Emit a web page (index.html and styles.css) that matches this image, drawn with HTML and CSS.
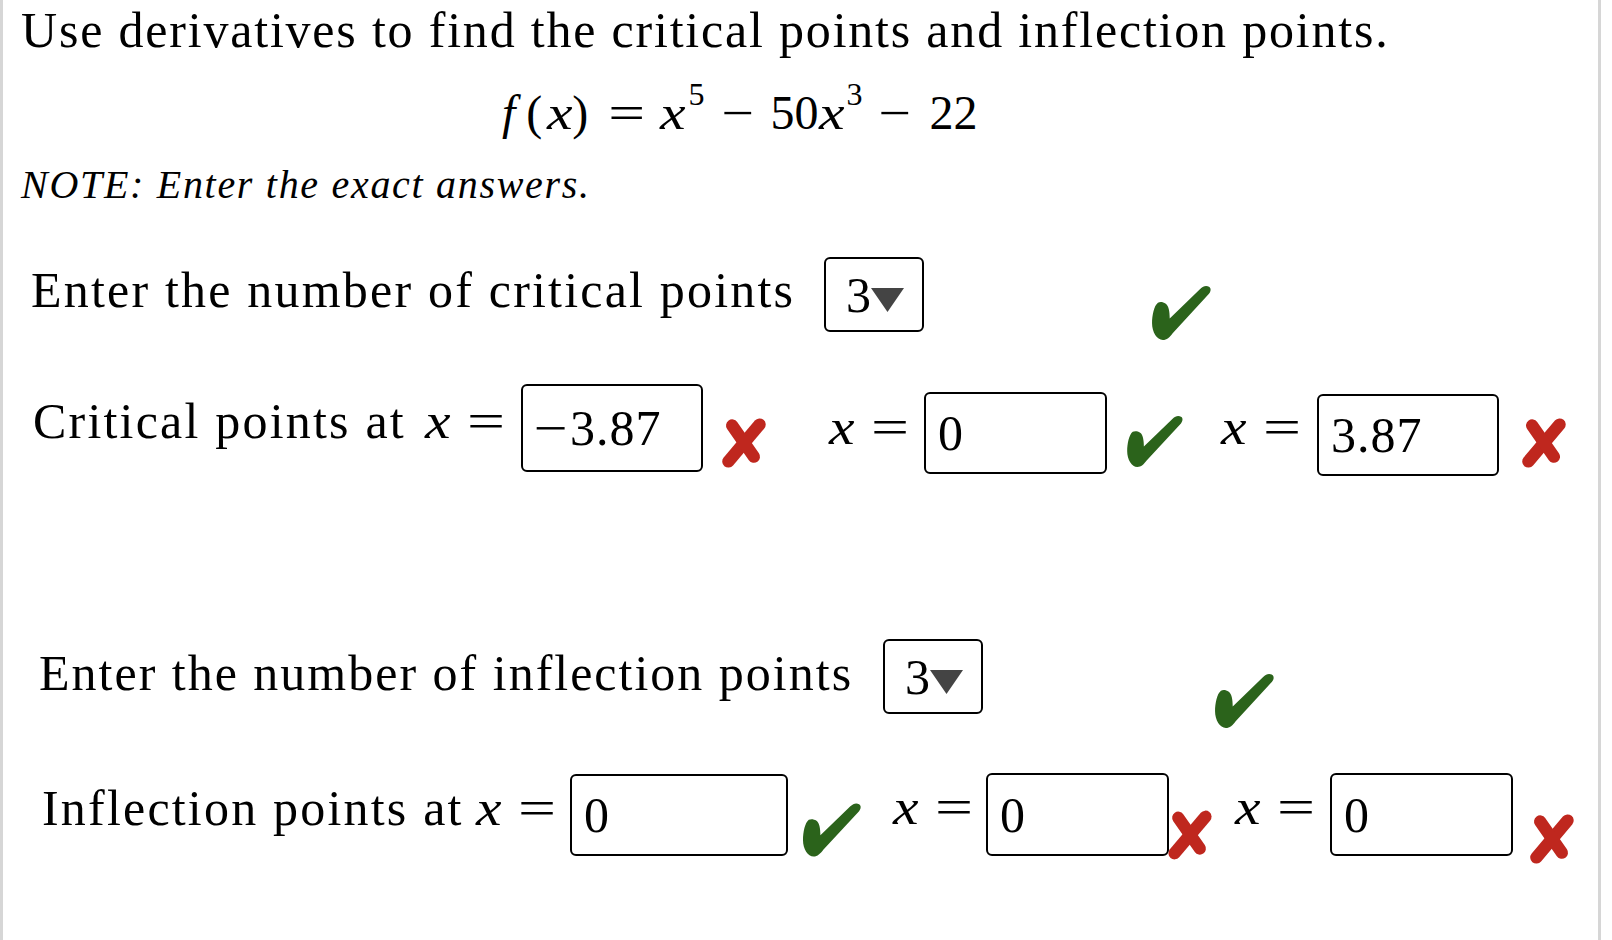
FILE: index.html
```html
<!DOCTYPE html>
<html>
<head>
<meta charset="utf-8">
<link rel="stylesheet" href="styles.css">
</head>
<body>
<div class="page">
  <p class="title">Use derivatives to find the critical points and inflection points.</p>
  <div class="formula"><span class="fm-f">f</span><span class="fm-open">(</span><span class="fm-x fm-x1">x</span><span class="fm-close">)</span><span class="fm-eq">=</span><span class="fm-x fm-x2">x</span><span class="fm-sup fm-sup1">5</span><span class="fm-minus fm-m1">−</span><span class="fm-num">50</span><span class="fm-x fm-x3">x</span><span class="fm-sup fm-sup2">3</span><span class="fm-minus fm-m2">−</span><span class="fm-num fm-last">22</span></div>
  <p class="note">NOTE: Enter the exact answers.</p>

  <div class="row row-a">
    <span class="label label-a">Enter the number of critical points</span>
    <div class="select sel-a"><span>3</span><svg class="tri" viewBox="0 0 33 24" width="33" height="24"><polygon points="0,0 33,0 16.5,24"/></svg></div>
    <svg class="check chk-a" viewBox="0 0 60 55" width="59" height="54"><path d="M6 17 C2 20 0 30 0 38 C0 47 5 55 11 55 C15 55 18 52 21 48 L58 8 C61 4 60 0 55 0 C53 0 51 1 49 3 L18 33 C18 26 17 20 14 18 C11 16 8 16 6 17 Z"/></svg>
  </div>

  <div class="row row-b">
    <span class="label label-b"><span class="words words-b">Critical points at</span><span class="mx">x</span><span class="req">=</span></span>
    <div class="input in-b1"><span class="neg">−</span>3.87</div>
    <svg class="cross x-b1" viewBox="0 0 48 55" width="47" height="52"><line x1="41" y1="8" x2="8" y2="47"/><line x1="12" y1="9" x2="35" y2="42"/></svg>
    <span class="xeq xeq-b1"><span class="mx">x</span><span class="req">=</span></span>
    <div class="input in-b2">0</div>
    <svg class="check chk-b2" viewBox="0 0 60 55" width="58" height="51"><path d="M6 17 C2 20 0 30 0 38 C0 47 5 55 11 55 C15 55 18 52 21 48 L58 8 C61 4 60 0 55 0 C53 0 51 1 49 3 L18 33 C18 26 17 20 14 18 C11 16 8 16 6 17 Z"/></svg>
    <span class="xeq xeq-b2"><span class="mx">x</span><span class="req">=</span></span>
    <div class="input in-b3">3.87</div>
    <svg class="cross x-b3" viewBox="0 0 48 55" width="47" height="52"><line x1="41" y1="8" x2="8" y2="47"/><line x1="12" y1="9" x2="35" y2="42"/></svg>
  </div>

  <div class="row row-c">
    <span class="label label-c">Enter the number of inflection points</span>
    <div class="select sel-c"><span>3</span><svg class="tri" viewBox="0 0 33 24" width="33" height="24"><polygon points="0,0 33,0 16.5,24"/></svg></div>
    <svg class="check chk-c" viewBox="0 0 60 55" width="59" height="54"><path d="M6 17 C2 20 0 30 0 38 C0 47 5 55 11 55 C15 55 18 52 21 48 L58 8 C61 4 60 0 55 0 C53 0 51 1 49 3 L18 33 C18 26 17 20 14 18 C11 16 8 16 6 17 Z"/></svg>
  </div>

  <div class="row row-d">
    <span class="label label-d"><span class="words words-d">Inflection points at</span><span class="mx">x</span><span class="req">=</span></span>
    <div class="input in-d1">0</div>
    <svg class="check chk-d1" viewBox="0 0 60 55" width="58" height="54"><path d="M6 17 C2 20 0 30 0 38 C0 47 5 55 11 55 C15 55 18 52 21 48 L58 8 C61 4 60 0 55 0 C53 0 51 1 49 3 L18 33 C18 26 17 20 14 18 C11 16 8 16 6 17 Z"/></svg>
    <span class="xeq xeq-d1"><span class="mx">x</span><span class="req">=</span></span>
    <div class="input in-d2">0</div>
    <svg class="cross x-d2" viewBox="0 0 48 55" width="45" height="52"><line x1="41" y1="8" x2="8" y2="47"/><line x1="12" y1="9" x2="35" y2="42"/></svg>
    <span class="xeq xeq-d2"><span class="mx">x</span><span class="req">=</span></span>
    <div class="input in-d3">0</div>
    <svg class="cross x-d3" viewBox="0 0 48 55" width="47" height="52"><line x1="41" y1="8" x2="8" y2="47"/><line x1="12" y1="9" x2="35" y2="42"/></svg>
  </div>
</div>
</body>
</html>
```

FILE: styles.css
```css
html, body {
  margin: 0;
  padding: 0;
  background: #ffffff;
}

.page {
  box-sizing: border-box;
  width: 1601px;
  height: 940px;
  overflow: hidden;
  border-left: 3px solid #d6d6d6;
  border-right: 3px solid #d6d6d6;
  font-family: "Liberation Serif", "Times New Roman", serif;
  color: #000;
}

/* ---------- heading ---------- */
.title {
  margin: 0;
  padding-left: 18px;
  font-size: 50px;
  line-height: 60px;
  letter-spacing: 1.8px;
  white-space: nowrap;
}

/* ---------- formula ---------- */
.formula {
  display: flex;
  align-items: baseline;
  height: 106px;
  line-height: 106px;
  font-size: 48px;
  padding-left: 499px;
  white-space: nowrap;
}

.formula span { flex: none; display: inline-block; }

.fm-f { font-style: italic; margin-right: 11px; }
.fm-open { margin-right: 5px; }
.fm-x {
  font-style: italic;
  width: 21px;
  transform: scaleX(1.2);
  transform-origin: left center;
}
.fm-close { margin-left: 4px; }
.fm-eq {
  margin-left: 25px;
  margin-right: 20px;
  transform: scaleX(1.36);
}
.fm-sup {
  font-size: 32px;
  line-height: 0;
  position: relative;
  top: -24px;
}
.fm-sup1 { margin-left: 7px; }
.fm-sup2 { margin-left: 6px; }
.fm-minus { transform: scaleX(1.2); }
.fm-m1 { margin-left: 20px; margin-right: 19px; }
.fm-m2 { margin-left: 19px; margin-right: 21px; }
.fm-num + .fm-x { margin-left: 1px; }

/* ---------- note ---------- */
.note {
  margin: 0;
  padding-left: 18px;
  font-style: italic;
  font-size: 40px;
  line-height: 37px;
  letter-spacing: 1.7px;
  white-space: nowrap;
}

/* ---------- answer rows ---------- */
.row {
  display: flex;
  align-items: flex-start;
}

.row-a { margin-top: 47px; height: 130px; }
.row-b { height: 255px; }
.row-c { height: 135px; }

.label {
  flex: none;
  display: flex;
  font-size: 50px;
  line-height: 60px;
  letter-spacing: 2.2px;
  white-space: nowrap;
}

.label-a { width: 793px; margin-left: 28px; margin-top: 10px; }
.label-b { margin-left: 30px; margin-top: 11px; }
.label-c { width: 844px; margin-left: 36px; margin-top: 8px; letter-spacing: 2px; }
.label-d { margin-left: 39px; margin-top: 8px; }

.words { flex: none; }
.words-b { width: 392px; }
.words-d { width: 434px; }

.mx {
  flex: none;
  display: inline-block;
  width: 22px;
  font-style: italic;
  letter-spacing: 0;
  transform: scaleX(1.15);
  transform-origin: left center;
}

.req {
  flex: none;
  display: inline-block;
  width: 28px;
  margin-left: 25px;
  letter-spacing: 0;
  transform: scaleX(1.35);
}

.xeq {
  flex: none;
  display: flex;
  font-size: 50px;
  line-height: 60px;
  white-space: nowrap;
}

.xeq-b1 { margin-left: 62px; margin-top: 17px; }
.xeq-b2 { margin-left: 37px; margin-top: 17px; }
.xeq-d1 { margin-left: 32px; margin-top: 7px; }
.xeq-d2 { margin-left: 23px; margin-top: 7px; }

/* ---------- boxes ---------- */
.select,
.input {
  flex: none;
  box-sizing: border-box;
  border: 2px solid #000;
  border-radius: 6px;
  display: flex;
  align-items: center;
  font-size: 50px;
  background: #fff;
}

.select { padding-left: 20px; width: 100px; height: 75px; }
.select .tri { flex: none; margin-left: 0; margin-top: 10px; fill: #444; }
.sel-a { margin-top: 7px; }
.sel-c { margin-top: 4px; }

.input { padding-left: 12px; letter-spacing: 1px; }
.neg {
  display: inline-block;
  width: 39px;
  margin-left: -4px;
  text-align: center;
  letter-spacing: 0;
  transform: scaleX(1.2);
}

.in-b1 { width: 182px; height: 88px; margin-left: 21px; margin-top: 4px; }
.in-b2 { width: 183px; height: 82px; margin-left: 20px; margin-top: 12px; }
.in-b3 { width: 182px; height: 82px; margin-left: 21px; margin-top: 14px; }
.in-d1 { width: 218px; height: 82px; margin-left: 19px; margin-top: 4px; }
.in-d2 { width: 183px; height: 83px; margin-left: 18px; margin-top: 3px; }
.in-d3 { width: 183px; height: 83px; margin-left: 20px; margin-top: 3px; }

/* ---------- feedback marks ---------- */
.check {
  flex: none;
  fill: #2b631b;
  overflow: visible;
}

.cross {
  flex: none;
  stroke: #bf271e;
  stroke-width: 13;
  stroke-linecap: round;
  overflow: visible;
}

.chk-a { margin-left: 228px; margin-top: 36px; }
.chk-b2 { margin-left: 19px; margin-top: 36px; }
.chk-c { margin-left: 232px; margin-top: 39px; }
.chk-d1 { margin-left: 15px; margin-top: 33px; }

.x-b1 { margin-left: 17px; margin-top: 37px; }
.x-b3 { margin-left: 21px; margin-top: 37px; }
.x-d2 { margin-left: -2px; margin-top: 39px; }
.x-d3 { margin-left: 15px; margin-top: 43px; }
```
